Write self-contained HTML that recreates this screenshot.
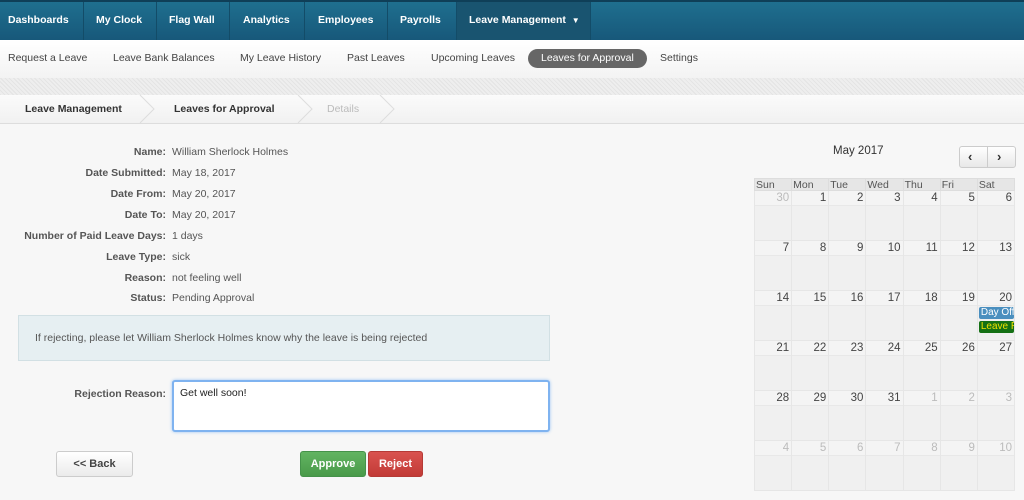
<!DOCTYPE html>
<html><head><meta charset="utf-8"><style>
*{box-sizing:border-box;margin:0;padding:0}
body{width:1024px;height:500px;overflow:hidden;background:#f7f7f7;font-family:"Liberation Sans",Arial,sans-serif;font-size:10.5px;color:#444;position:relative}
.abs{position:absolute}
#nav{left:0;top:0;width:1024px;height:40px;background:linear-gradient(#1f6f8f,#17587a);border-top:2px solid #0f3f58}
#nav span{position:absolute;top:12px;color:#fff;font-weight:bold;font-size:10.5px;white-space:nowrap}
#nav i{position:absolute;top:0;width:1px;height:38px;background:#134c68}
#sub{left:0;top:40px;width:1024px;height:38px;background:linear-gradient(#fff,#f3f3f3)}
#sub span{position:absolute;top:12px;color:#444;font-size:10.5px;white-space:nowrap}
#band{left:0;top:78px;width:1024px;height:17px;background:repeating-linear-gradient(45deg,#e4e4e4 0 1px,#eeeeee 1px 3px)}
#bc{left:0;top:95px;width:1024px;height:29px;background:linear-gradient(#fbfbfb,#f1f1f1);border-bottom:1px solid #ddd}
#bc span{position:absolute;top:8px;font-weight:bold;font-size:10.5px;color:#333}
.lab{position:absolute;right:858px;font-weight:bold;color:#555;text-align:right;white-space:nowrap}
.val{position:absolute;left:172px;color:#555;white-space:nowrap}
.btn{position:absolute;border-radius:3px;font-weight:bold;text-align:center;font-size:11px;line-height:25px}
table{position:absolute;left:754px;top:178px;width:261px;border-collapse:collapse;table-layout:fixed}
th{height:12px;font-weight:normal;color:#555;text-align:left;background:#e6e6e6;border:1px solid #ddd;font-size:10.5px;line-height:10px;padding-left:1px}
td{height:50px;border:1px solid #e6e6e6;background:#f0f0f0;vertical-align:top;text-align:right;padding:0;position:relative}
td b{display:block;height:15px;background:#f4f4f4;font-weight:normal;font-size:11.5px;color:#444;padding:1px 2px 0 0;border-bottom:1px solid #e8e8e8}
td.o b{color:#bbb}
</style></head><body>
<div id="nav" class="abs">
<span style="left:8px">Dashboards</span><i style="left:83px"></i>
<span style="left:96px">My Clock</span><i style="left:156px"></i>
<span style="left:169px">Flag Wall</span><i style="left:229px"></i>
<span style="left:243px">Analytics</span><i style="left:304px"></i>
<span style="left:318px">Employees</span><i style="left:387px"></i>
<span style="left:400px">Payrolls</span><i style="left:456px"></i>
<div class="abs" style="left:457px;top:0;width:133px;height:38px;background:#195470"></div>
<span style="left:469px">Leave Management &nbsp;<small style="font-size:8px">▼</small></span><i style="left:590px"></i>
</div>
<div id="sub" class="abs">
<span style="left:8px">Request a Leave</span>
<span style="left:113px">Leave Bank Balances</span>
<span style="left:240px">My Leave History</span>
<span style="left:347px">Past Leaves</span>
<span style="left:431px">Upcoming Leaves</span>
<div class="abs" style="left:528px;top:9px;width:119px;height:19px;border-radius:10px;background:#666"></div>
<span style="left:541px;color:#fff">Leaves for Approval</span>
<span style="left:660px">Settings</span>
</div>
<div id="band" class="abs"></div>
<div id="bc" class="abs">
<span style="left:25px">Leave Management</span>
<span style="left:174px">Leaves for Approval</span>
<span style="left:327px;color:#bbb;font-weight:normal">Details</span>
<svg class="abs" style="left:0;top:0" width="400" height="29"><polyline points="140,0 154,14 140,28" fill="none" stroke="#ddd"/><polyline points="298,0 312,14 298,28" fill="none" stroke="#ddd"/><polyline points="380,0 394,14 380,28" fill="none" stroke="#ddd"/></svg>
</div>
<div class="lab" style="top:146px">Name:</div><div class="val" style="top:146px">William Sherlock Holmes</div>
<div class="lab" style="top:167px">Date Submitted:</div><div class="val" style="top:167px">May 18, 2017</div>
<div class="lab" style="top:188px">Date From:</div><div class="val" style="top:188px">May 20, 2017</div>
<div class="lab" style="top:209px">Date To:</div><div class="val" style="top:209px">May 20, 2017</div>
<div class="lab" style="top:230px">Number of Paid Leave Days:</div><div class="val" style="top:230px">1 days</div>
<div class="lab" style="top:251px">Leave Type:</div><div class="val" style="top:251px">sick</div>
<div class="lab" style="top:272px">Reason:</div><div class="val" style="top:272px">not feeling well</div>
<div class="lab" style="top:292px">Status:</div><div class="val" style="top:292px">Pending Approval</div>
<div class="abs" style="left:18px;top:315px;width:532px;height:46px;background:#e6eff2;border:1px solid #d2e0e4"></div>
<div class="abs" style="left:35px;top:332px;color:#555">If rejecting, please let William Sherlock Holmes know why the leave is being rejected</div>
<div class="lab" style="top:388px">Rejection Reason:</div>
<div class="abs" style="left:172px;top:380px;width:378px;height:52px;background:#fff;border:2px solid #7fb3f0;border-radius:3px;box-shadow:0 0 3px #9cc4f5;padding:5px 6px;color:#222">Get well soon!</div>
<div class="btn" style="left:56px;top:451px;width:77px;height:26px;background:linear-gradient(#fff,#ebebeb);border:1px solid #ccc;color:#444">&lt;&lt; Back</div>
<div class="btn" style="left:300px;top:451px;width:66px;height:26px;background:linear-gradient(#62b462,#4a9a4a);border:1px solid #45924a;color:#fff">Approve</div>
<div class="btn" style="left:368px;top:451px;width:55px;height:26px;background:linear-gradient(#d9534f,#c23b37);border:1px solid #b53a36;color:#fff">Reject</div>
<div class="abs" style="left:833px;top:145px;font-size:11.5px;color:#333">May 2017</div>
<div class="abs" style="left:959px;top:146px;width:57px;height:22px;border:1px solid #ccc;border-radius:3px;background:linear-gradient(#fff,#e8e8e8)"></div>
<div class="abs" style="left:987px;top:147px;width:1px;height:20px;background:#ccc"></div>
<div class="abs" style="left:968px;top:149px;font-weight:bold;font-size:13px;color:#333">‹</div>
<div class="abs" style="left:997px;top:149px;font-weight:bold;font-size:13px;color:#333">›</div>
<table>
<tr><th>Sun</th><th>Mon</th><th>Tue</th><th>Wed</th><th>Thu</th><th>Fri</th><th>Sat</th></tr>
<tr><td class="o"><b>30</b></td><td><b>1</b></td><td><b>2</b></td><td><b>3</b></td><td><b>4</b></td><td><b>5</b></td><td><b>6</b></td></tr>
<tr><td><b>7</b></td><td><b>8</b></td><td><b>9</b></td><td><b>10</b></td><td><b>11</b></td><td><b>12</b></td><td><b>13</b></td></tr>
<tr><td><b>14</b></td><td><b>15</b></td><td><b>16</b></td><td><b>17</b></td><td><b>18</b></td><td><b>19</b></td><td><b>20</b>
<div style="position:absolute;left:1px;top:16px;width:35px;height:12px;background:#4a8fbf;border-radius:2px;color:#fff;font-size:10px;line-height:12px;text-align:left;padding-left:2px;overflow:hidden;white-space:nowrap">Day Off</div>
<div style="position:absolute;left:1px;top:30px;width:35px;height:12px;background:#157015;border-radius:2px;color:#f0e000;font-size:10px;line-height:12px;text-align:left;padding-left:2px;overflow:hidden;white-space:nowrap">Leave R</div></td></tr>
<tr><td><b>21</b></td><td><b>22</b></td><td><b>23</b></td><td><b>24</b></td><td><b>25</b></td><td><b>26</b></td><td><b>27</b></td></tr>
<tr><td><b>28</b></td><td><b>29</b></td><td><b>30</b></td><td><b>31</b></td><td class="o"><b>1</b></td><td class="o"><b>2</b></td><td class="o"><b>3</b></td></tr>
<tr><td class="o"><b>4</b></td><td class="o"><b>5</b></td><td class="o"><b>6</b></td><td class="o"><b>7</b></td><td class="o"><b>8</b></td><td class="o"><b>9</b></td><td class="o"><b>10</b></td></tr>
</table>
</body></html>
